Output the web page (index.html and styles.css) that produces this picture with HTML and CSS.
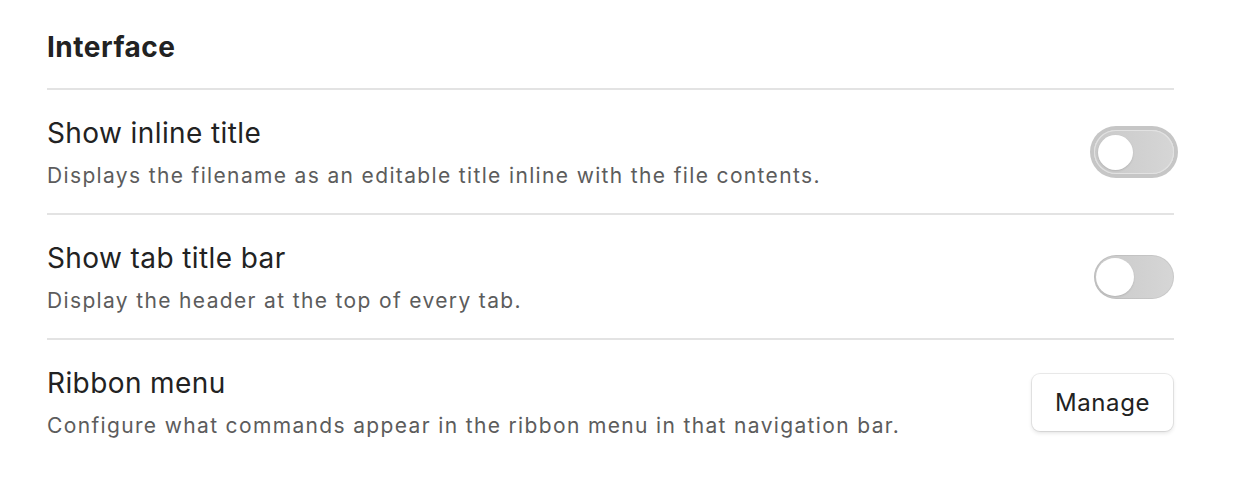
FILE: index.html
```html
<!DOCTYPE html>
<html lang="en">
<head>
<meta charset="utf-8">
<title>Interface settings</title>
<link rel="stylesheet" href="styles.css">
</head>
<body>
<div class="settings">
  <h2 class="heading">Interface</h2>
  <div class="item">
    <div class="info">
      <div class="name">Show inline title</div>
      <div class="desc">Displays the filename as an editable title inline with the file contents.</div>
    </div>
    <div class="control">
      <div class="toggle focused"><div class="knob"></div></div>
    </div>
  </div>
  <div class="item">
    <div class="info">
      <div class="name">Show tab title bar</div>
      <div class="desc">Display the header at the top of every tab.</div>
    </div>
    <div class="control">
      <div class="toggle"><div class="knob"></div></div>
    </div>
  </div>
  <div class="item last">
    <div class="info">
      <div class="name">Ribbon menu</div>
      <div class="desc">Configure what commands appear in the ribbon menu in that navigation bar.</div>
    </div>
    <div class="control">
      <button class="btn">Manage</button>
    </div>
  </div>
</div>
</body>
</html>
```
FILE: styles.css
```css
html, body {
  margin: 0;
  padding: 0;
  background: #ffffff;
}
body {
  font-family: Inter, "Noto Sans", sans-serif;
  color: #222222;
}
.settings {
  padding: 0 70px 0 47px;
}
.heading {
  margin: 0;
  padding: 29px 0 23px;
  font-size: 28px;
  line-height: 36px;
  font-weight: 700;
  letter-spacing: 0.5px;
  color: #222222;
  border-bottom: 2px solid #e3e3e3;
}
.item {
  display: flex;
  align-items: center;
  justify-content: space-between;
  padding: 25px 0 24px;
  border-bottom: 2px solid #e3e3e3;
}
.item.last {
  border-bottom: none;
}
.name {
  font-size: 28px;
  line-height: 36px;
  letter-spacing: 0.4px;
  color: #222222;
}
.desc {
  margin-top: 11px;
  font-size: 21px;
  line-height: 27px;
  letter-spacing: 1.35px;
  color: #5c5c5c;
}
.control {
  display: flex;
  align-items: center;
}
.toggle {
  position: relative;
  width: 80px;
  height: 44px;
  border-radius: 22px;
  background: linear-gradient(90deg, #c9c9c9, #d6d6d6);
  box-shadow: inset 0 0 0 1px rgba(0,0,0,0.06);
}
.toggle.focused {
  box-shadow: 0 0 0 4px #c6c6c6, inset 0 0 0 1px #e2e2e2;
}
.knob {
  position: absolute;
  left: 2px;
  top: 3px;
  width: 38px;
  height: 38px;
  border-radius: 50%;
  background: #ffffff;
  box-shadow: 0 1px 2px rgba(0,0,0,0.12);
}
.toggle.focused .knob {
  left: 4px;
  top: 5px;
  width: 35px;
  height: 35px;
}
.btn {
  width: 141px;
  height: 57px;
  margin-right: 1px;
  border: none;
  border-radius: 8px;
  background: #ffffff;
  font-family: Inter, "Noto Sans", sans-serif;
  font-size: 24px;
  letter-spacing: 0.6px;
  color: #222222;
  box-shadow: 0 0 0 1px rgba(0,0,0,0.08), 0 2px 4px rgba(0,0,0,0.12);
  cursor: pointer;
}
```
